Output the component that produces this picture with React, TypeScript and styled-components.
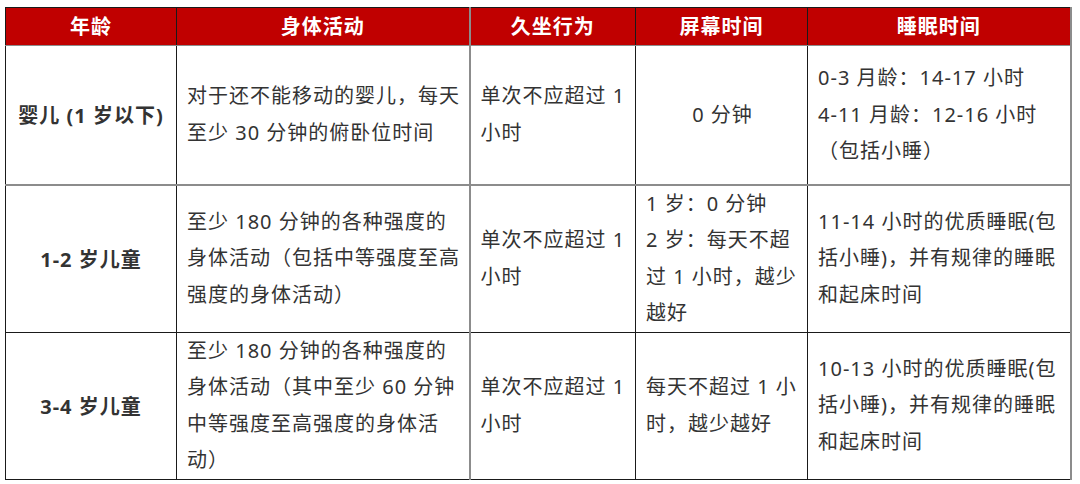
import React from 'react';
import styled, { createGlobalStyle } from 'styled-components';

const GlobalStyle = createGlobalStyle`
  html, body {
    margin: 0;
    padding: 0;
    background: #fff;
  }
`;

const Page = styled.div`
  padding: 7px 0 0 5px;
  font-family: "Noto Sans", "Noto Sans CJK SC", sans-serif;
`;

const Table = styled.table`
  border-collapse: collapse;
  table-layout: fixed;
  width: 1065px;
  color: #333;
  font-size: 20px;
  letter-spacing: 1px;

  tbody tr:first-child td {
    border-bottom: 2px solid #8c8c8c;
  }
  td:nth-child(3),
  th:nth-child(3) {
    border-left: 2px solid #8c8c8c;
  }
  td:last-child,
  th:last-child {
    border-right: 2px solid #8c8c8c;
  }
`;

const Col = styled.col<{ $w: number }>`
  width: ${(p) => p.$w}px;
`;

const HeadCell = styled.th`
  height: 37px;
  padding: 0;
  background: #c00000;
  color: #fff;
  font-weight: 700;
  text-align: center;
  vertical-align: middle;
  line-height: 24px;
  border: 1px solid #1a1a1a;
  border-bottom: 1px solid #8c8c8c;
`;

const Row = styled.tr<{ $h: number }>`
  height: ${(p) => p.$h}px;
`;

const AgeCell = styled.td`
  padding: 0 6px;
  font-weight: 700;
  text-align: center;
  vertical-align: middle;
  border: 1px solid #1a1a1a;
`;

const Cell = styled.td<{ $center?: boolean }>`
  padding: 0 8px 0 10px;
  text-align: ${(p) => (p.$center ? 'center' : 'left')};
  vertical-align: middle;
  line-height: 36.5px;
  border: 1px solid #1a1a1a;
  word-break: normal;
`;

const headers = ['年龄', '身体活动', '久坐行为', '屏幕时间', '睡眠时间'];

export default function App() {
  return (
    <Page>
      <GlobalStyle />
      <Table>
        <colgroup>
          <Col $w={171} />
          <Col $w={293} />
          <Col $w={166} />
          <Col $w={172} />
          <Col $w={263} />
        </colgroup>
        <thead>
          <tr>
            {headers.map((h) => (
              <HeadCell key={h}>{h}</HeadCell>
            ))}
          </tr>
        </thead>
        <tbody>
          <Row $h={139}>
            <AgeCell>婴儿 (1 岁以下)</AgeCell>
            <Cell>对于还不能移动的婴儿，每天至少 30 分钟的俯卧位时间</Cell>
            <Cell>单次不应超过 1 小时</Cell>
            <Cell $center>0 分钟</Cell>
            <Cell>
              0-3 月龄：14-17 小时
              <br />
              4-11 月龄：12-16 小时
              <br />
              （包括小睡）
            </Cell>
          </Row>
          <Row $h={146}>
            <AgeCell>1-2 岁儿童</AgeCell>
            <Cell>至少 180 分钟的各种强度的身体活动（包括中等强度至高强度的身体活动）</Cell>
            <Cell>单次不应超过 1 小时</Cell>
            <Cell>
              1 岁：0 分钟
              <br />
              2 岁：每天不超过 1 小时，越少越好
            </Cell>
            <Cell>11-14 小时的优质睡眠(包括小睡)，并有规律的睡眠和起床时间</Cell>
          </Row>
          <Row $h={146}>
            <AgeCell>3-4 岁儿童</AgeCell>
            <Cell>至少 180 分钟的各种强度的身体活动（其中至少 60 分钟中等强度至高强度的身体活动）</Cell>
            <Cell>单次不应超过 1 小时</Cell>
            <Cell>每天不超过 1 小时，越少越好</Cell>
            <Cell>10-13 小时的优质睡眠(包括小睡)，并有规律的睡眠和起床时间</Cell>
          </Row>
        </tbody>
      </Table>
    </Page>
  );
}
